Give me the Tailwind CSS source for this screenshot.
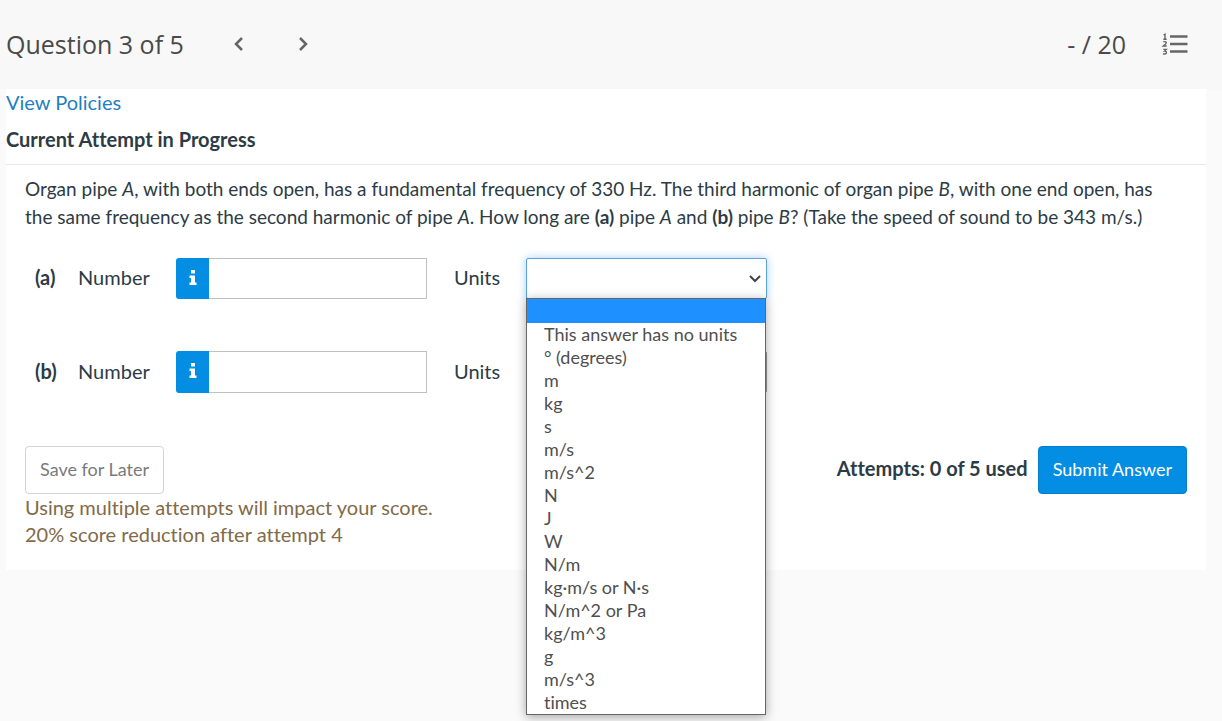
<!DOCTYPE html>
<html lang="en">
<head>
  <meta charset="UTF-8" />
  <meta name="viewport" content="width=device-width, initial-scale=1.0" />
  <title>Question 3 of 5</title>
  <script src="https://cdn.jsdelivr.net/npm/@tailwindcss/browser@4"></script>
</head>
<body class="min-h-screen overflow-x-hidden bg-[#fafafa] font-['Lato',sans-serif] text-xl text-[#2d3b45] [font-variant-ligatures:none]">

  <!-- Question header -->
  <header class="flex h-[89px] items-center bg-[#f8f8f8] pl-[6px] pr-[34px] font-['Open_Sans',sans-serif] text-[25px] text-[#4a4a4a]">
    <h1>Question 3 of 5</h1>
    <nav class="ml-10 flex gap-[37px] pb-[2px]">
      <button type="button" aria-label="Previous question" class="flex size-7 items-center justify-center">
        <svg class="h-4 w-3" viewBox="0 0 12 16" fill="none" stroke="#666" stroke-width="2.5"><path d="M10 2 4 8l6 6" /></svg>
      </button>
      <button type="button" aria-label="Next question" class="flex size-7 items-center justify-center">
        <svg class="h-4 w-3" viewBox="0 0 12 16" fill="none" stroke="#666" stroke-width="2.5"><path d="m3 2 6 6-6 6" /></svg>
      </button>
    </nav>
    <p class="ml-auto">- / 20</p>
    <button type="button" aria-label="Question list" class="ml-[35px] pb-[2px]">
      <svg class="h-[22px] w-[27px]" viewBox="0 0 27 22" fill="none" stroke="#666">
        <path stroke-width="2.5" d="M9 3.500h17.500M9 11h17.500M9 18.500h17.500" />
        <path stroke-width="1.4" d="M2.500 2l1.500-.8v5M2.300 6.200h3.400M2.300 9.200c.6-.8 3-.8 3 .5 0 1.200-1.600 2-3 3.300h3.400M2.300 16.400h3l-1.700 1.700c2.500-.2 2.500 2.900 0 2.900-.6 0-1-.1-1.500-.4" />
      </svg>
    </button>
  </header>

  <main class="ml-[6px] mr-4 bg-white pb-[22px]">
    <div class="border-b border-[#e8e8e8] pb-3">
      <a href="#" class="block w-fit leading-[26px] text-[#1f7fc0]">View Policies</a>
      <h2 class="mt-[11px] leading-[26px] font-bold">Current Attempt in Progress</h2>
    </div>

    <form class="px-[19px] pt-[10px]">
      <p class="text-[19px] leading-7">Organ pipe <i>A</i>, with both ends open, has a fundamental frequency of 330 Hz. The third harmonic of organ pipe <i>B</i>, with one end open, has<br /> the same frequency as the second harmonic of pipe <i>A</i>. How long are <b>(a)</b> pipe <i>A</i> and <b>(b)</b> pipe <i>B</i>? (Take the speed of sound to be 343 m/s.)</p>

      <!-- Answer rows -->
      <div class="mt-[27px] flex flex-col gap-[52px] pl-[10px]">
        <div class="flex items-center">
          <b class="w-[43px] pb-[3px]">(a)</b>
          <label for="numberA" class="w-[98px] pb-[3px]">Number</label>
          <div class="flex h-[41px] w-[251px]">
            <button type="button" aria-label="Info" class="flex w-[33px] items-center justify-center rounded-l-[3px] bg-[#038ee3]">
              <svg class="mb-[3px] h-[15px] w-2" viewBox="0 0 8 15" fill="#fff"><path d="M2 0h4v3.500H2zM.5 5.500H6v7h1.500V15H.5v-2.500H2V8H.5z" /></svg>
            </button>
            <input id="numberA" type="text" class="min-w-0 flex-1 border border-l-0 border-[#c0c0c0] px-2 outline-none" />
          </div>
          <label for="unitsA" class="ml-[27px] w-[72px] pb-[3px]">Units</label>
          <div class="relative w-[241px]">
            <select id="unitsA" class="block h-[41px] w-full appearance-none rounded-[2px] border border-[#5ba3dc] bg-white px-4 text-lg shadow-[0_0_8px_rgba(102,175,233,0.6)] outline-none">
              <option></option>
            </select>
            <svg class="pointer-events-none absolute top-4 right-[6px] h-[10px] w-3" viewBox="0 0 12 10" fill="none" stroke="#444" stroke-width="2"><path d="m1 2 5 5 5-5" /></svg>
            <!-- Open list of units -->
            <ul role="listbox" aria-label="Units" class="absolute top-10 left-0 z-10 w-[240px] border border-[#666] bg-white text-lg leading-[23px] text-[#4f4f4f] shadow-[0_2px_10px_rgba(0,0,0,0.35)]">
              <li role="option" aria-selected="true" class="h-6 bg-[#1e90ff]"></li>
              <li role="option" class="px-[17px]">This answer has no units</li>
              <li role="option" class="px-[17px]">° (degrees)</li>
              <li role="option" class="px-[17px]">m</li>
              <li role="option" class="px-[17px]">kg</li>
              <li role="option" class="px-[17px]">s</li>
              <li role="option" class="px-[17px]">m/s</li>
              <li role="option" class="px-[17px]">m/s^2</li>
              <li role="option" class="px-[17px]">N</li>
              <li role="option" class="px-[17px]">J</li>
              <li role="option" class="px-[17px]">W</li>
              <li role="option" class="px-[17px]">N/m</li>
              <li role="option" class="px-[17px]">kg·m/s or N·s</li>
              <li role="option" class="px-[17px]">N/m^2 or Pa</li>
              <li role="option" class="px-[17px]">kg/m^3</li>
              <li role="option" class="px-[17px]">g</li>
              <li role="option" class="px-[17px]">m/s^3</li>
              <li role="option" class="px-[17px]">times</li>
            </ul>
          </div>
        </div>

        <div class="flex items-center">
          <b class="w-[43px] pb-[2px]">(b)</b>
          <label for="numberB" class="w-[98px] pb-[2px]">Number</label>
          <div class="flex h-[42px] w-[251px]">
            <button type="button" aria-label="Info" class="flex w-[33px] items-center justify-center rounded-l-[3px] bg-[#038ee3]">
              <svg class="mb-[3px] h-[15px] w-2" viewBox="0 0 8 15" fill="#fff"><path d="M2 0h4v3.500H2zM.5 5.500H6v7h1.500V15H.5v-2.500H2V8H.5z" /></svg>
            </button>
            <input id="numberB" type="text" class="min-w-0 flex-1 border border-l-0 border-[#c0c0c0] px-2 outline-none" />
          </div>
          <label for="unitsB" class="ml-[27px] w-[72px] pb-[2px]">Units</label>
          <select id="unitsB" class="h-[42px] w-[241px] appearance-none rounded-[2px] border border-[#999] bg-white px-4 text-lg">
            <option></option>
          </select>
        </div>
      </div>

      <!-- Actions -->
      <div class="mt-[53px] flex items-center justify-between">
        <button type="button" class="h-12 rounded border border-[#d4d4d4] px-[14px] pb-[2px] text-lg text-[#7a7a7a]">Save for Later</button>
        <div class="flex items-center gap-[10px]">
          <p class="pb-1 font-bold">Attempts: 0 of 5 used</p>
          <button type="submit" class="h-12 rounded border border-[#0380cc] bg-[#038ee3] px-[14px] pb-[2px] text-lg text-white">Submit Answer</button>
        </div>
      </div>
      <p class="leading-[27px] text-[#826a48]">Using multiple attempts will impact your score.<br />20% score reduction after attempt 4</p>
    </form>
  </main>

</body>
</html>
